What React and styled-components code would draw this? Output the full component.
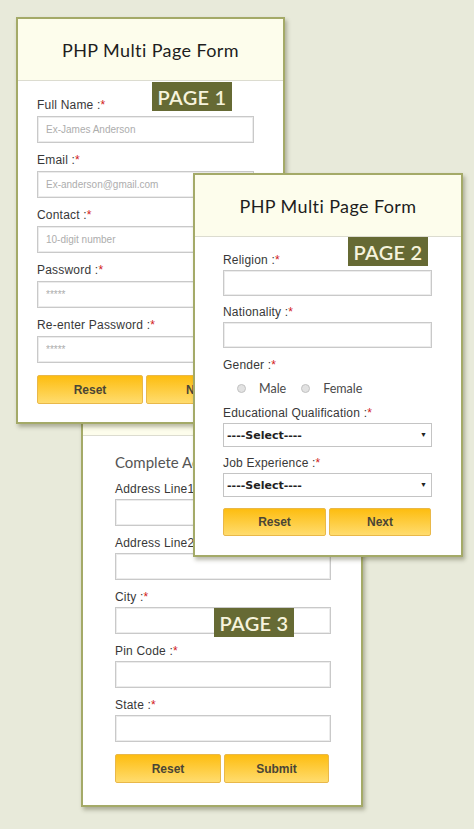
import React from "react";
import styled, { createGlobalStyle } from "styled-components";

const Global = createGlobalStyle`
  html, body {
    margin: 0;
    padding: 0;
    background: #e8eada;
  }
  * { box-sizing: border-box; }
`;

const Desk = styled.div`
  position: relative;
  width: 474px;
  height: 829px;
  overflow: hidden;
  background: #e8eada;
`;

const Card = styled.div`
  position: absolute;
  left: ${(p) => p.$x}px;
  top: ${(p) => p.$y}px;
  width: ${(p) => p.$w}px;
  height: ${(p) => p.$h}px;
  z-index: ${(p) => p.$z};
  background: #fff;
  border: 2px solid #a4aa68;
  box-shadow: 2px 3px 4px rgba(60, 60, 30, 0.35);
  display: flex;
  flex-direction: column;
`;

const Header = styled.div`
  height: 62px;
  flex: none;
  background: #fdfdec;
  border-bottom: 1px solid #dcdcd0;
  display: flex;
  align-items: center;
  justify-content: center;
  font-family: Lato, "Open Sans", sans-serif;
  font-size: 18px;
  color: #1e1e1e;
  letter-spacing: 0.4px;
`;

const Body = styled.div`
  padding: ${(p) => p.$top}px 0 0 ${(p) => p.$left}px;
  display: flex;
  flex-direction: column;
  width: ${(p) => p.$left + p.$inner}px;
`;

const Badge = styled.div`
  position: absolute;
  left: ${(p) => p.$x}px;
  top: ${(p) => p.$y}px;
  width: 80px;
  height: 29px;
  background: #666a34;
  color: #f6f3dc;
  font-family: Lato, "Open Sans", sans-serif;
  font-size: 20px;
  font-weight: 600;
  letter-spacing: 0.3px;
  display: flex;
  align-items: center;
  justify-content: center;
  z-index: 2;
`;

const Heading = styled.div`
  font-family: Lato, "Open Sans", sans-serif;
  font-size: 15px;
  line-height: 16px;
  color: #555;
  margin-bottom: 12px;
`;

const Label = styled.label`
  display: block;
  font-family: "Liberation Sans", Arial, sans-serif;
  font-size: 12px;
  line-height: 14px;
  color: #383838;
  margin-bottom: ${(p) => p.$mb}px;
  letter-spacing: 0.2px;
  span { color: #d21a1a; }
`;

const Input = styled.input`
  display: block;
  width: 100%;
  height: ${(p) => p.$h}px;
  border: 1px solid #c9c9c9;
  box-shadow: inset 0 0 0 1px #ececec;
  padding: 0 8px;
  font-family: "Liberation Sans", Arial, sans-serif;
  font-size: 10px;
  color: #333;
  outline: none;
  &::placeholder { color: #adadad; }
`;

const FieldWrap = styled.div`
  margin-bottom: ${(p) => p.$gap}px;
`;

const SelectWrap = styled.div`
  position: relative;
  &::after {
    content: "▼";
    position: absolute;
    right: 5px;
    top: 8px;
    font-size: 7px;
    color: #222;
    pointer-events: none;
  }
`;

const Select = styled.select`
  appearance: none;
  display: block;
  width: 100%;
  height: 24px;
  border: 1px solid #c4c4c4;
  background: #fff;
  padding: 0 3px;
  font-family: "DejaVu Sans", Verdana, sans-serif;
  font-weight: bold;
  font-size: 11px;
  color: #222;
  border-radius: 0;
`;

const RadioRow = styled.div`
  height: 26px;
  display: flex;
  align-items: center;
  padding-left: 14px;
  margin-bottom: 5px;
  font-family: Lato, "Open Sans", sans-serif;
  font-size: 12.5px;
  color: #4a4a4a;
`;

const Radio = styled.span`
  width: 9px;
  height: 9px;
  border-radius: 50%;
  background: #e2e2e2;
  border: 1px solid #c2c2c2;
  margin-right: 13px;
`;

const RadioText = styled.span`
  margin-right: 15px;
`;

const Buttons = styled.div`
  display: flex;
  gap: 3px;
`;

const Button = styled.button`
  width: ${(p) => p.$w}px;
  height: ${(p) => p.$h}px;
  border: 1px solid #e9b849;
  border-radius: 2px;
  background: linear-gradient(#fdbd10, #ffdc6e);
  font-family: "Liberation Sans", Arial, sans-serif;
  font-weight: bold;
  font-size: 12px;
  color: #4a4536;
  padding: 0;
`;

const Field = ({ label, req = true, placeholder, h = 27, mb = 4, gap = 10 }) => (
  <FieldWrap $gap={gap}>
    <Label $mb={mb}>
      {label} :{req && <span>*</span>}
    </Label>
    <Input $h={h} placeholder={placeholder} />
  </FieldWrap>
);

const SelectField = ({ label, gap }) => (
  <FieldWrap $gap={gap}>
    <Label $mb={3}>
      {label} :<span>*</span>
    </Label>
    <SelectWrap>
      <Select defaultValue="">
        <option value="">----Select----</option>
      </Select>
    </SelectWrap>
  </FieldWrap>
);

const App = () => {
  return (
    <>
      <Global />
      <Desk>
        {/* page 3, lowest */}
        <Card $x={81} $y={372} $w={282} $h={435} $z={1}>
          <Header>PHP Multi Page Form</Header>
          <Badge $x={131} $y={234}>PAGE 3</Badge>
          <Body $top={18} $left={32} $inner={216}>
            <Heading>Complete Address</Heading>
            <Field label="Address Line1" mb={3} />
            <Field label="Address Line2" mb={3} />
            <Field label="City" mb={3} />
            <Field label="Pin Code" mb={3} />
            <Field label="State" mb={3} gap={12} />
            <Buttons>
              <Button $w={106} $h={29}>Reset</Button>
              <Button $w={105} $h={29}>Submit</Button>
            </Buttons>
          </Body>
        </Card>

        {/* page 1 */}
        <Card $x={16} $y={17} $w={269} $h={407} $z={2}>
          <Header>PHP Multi Page Form</Header>
          <Badge $x={134} $y={63}>PAGE 1</Badge>
          <Body $top={17} $left={19} $inner={217}>
            <Field label="Full Name" placeholder="Ex-James Anderson" />
            <Field label="Email" placeholder="Ex-anderson@gmail.com" />
            <Field label="Contact" placeholder="10-digit number" />
            <Field label="Password" placeholder="*****" />
            <Field label="Re-enter Password" placeholder="*****" gap={12} />
            <Buttons>
              <Button $w={106} $h={29}>Reset</Button>
              <Button $w={106} $h={29}>Next</Button>
            </Buttons>
          </Body>
        </Card>

        {/* page 2, on top */}
        <Card $x={193} $y={173} $w={270} $h={384} $z={3}>
          <Header>PHP Multi Page Form</Header>
          <Badge $x={153} $y={62}>PAGE 2</Badge>
          <Body $top={16} $left={28} $inner={209}>
            <Field label="Religion" h={26} mb={3} gap={9} />
            <Field label="Nationality" h={26} mb={3} gap={10} />
            <Label $mb={3}>
              Gender :<span>*</span>
            </Label>
            <RadioRow>
              <Radio />
              <RadioText>Male</RadioText>
              <Radio />
              <RadioText>Female</RadioText>
            </RadioRow>
            <SelectField label="Educational Qualification" gap={9} />
            <SelectField label="Job Experience" gap={11} />
            <Buttons>
              <Button $w={103} $h={28}>Reset</Button>
              <Button $w={102} $h={28}>Next</Button>
            </Buttons>
          </Body>
        </Card>
      </Desk>
    </>
  );
};

export default App;
